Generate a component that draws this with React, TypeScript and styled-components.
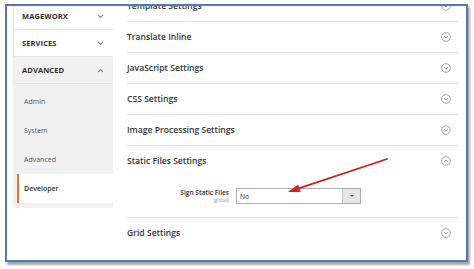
import React from "react";
import styled, { createGlobalStyle } from "styled-components";

const GlobalStyle = createGlobalStyle`
  html, body {
    margin: 0;
    padding: 0;
    background: #ffffff;
  }
  body {
    font-family: "Open Sans", "Liberation Sans", sans-serif;
    color: #303030;
  }
`;

const Page = styled.div`
  width: 474px;
  height: 269px;
  padding: 4px 0 0 5px;
  box-sizing: border-box;
`;

// blue screenshot frame with a drop shadow
const Frame = styled.div`
  width: 463px;
  height: 258px;
  box-sizing: border-box;
  border: 2px solid #5279b6;
  box-shadow: 2px 3px 2px rgba(60, 60, 60, 0.45);
  overflow: hidden;
  display: grid;
  grid-template-columns: 100px 331px;
  column-gap: 14px;
  padding-left: 6px;
  background: #ffffff;
`;

const Sidebar = styled.nav`
  display: flex;
  flex-direction: column;
  margin-top: -3px;
`;

const TopItem = styled.div<{ $open?: boolean }>`
  display: flex;
  align-items: center;
  justify-content: space-between;
  height: 27px;
  padding: 0 9px 0 8px;
  box-sizing: border-box;
  background: ${(p) => (p.$open ? "#f1f1f1" : "#ffffff")};
  border-bottom: 1px solid ${(p) => (p.$open ? "#e4e4e4" : "#e6e6e6")};
  border-left: 1px solid #ececec;
  font-size: 7.5px;
  font-weight: 700;
  letter-spacing: 0.1px;
  color: #303030;
`;

const Chevron = styled.svg`
  width: 7px;
  height: 5px;
  stroke: #8a8a8a;
  fill: none;
  stroke-width: 1.2;
`;

const SubList = styled.div`
  display: flex;
  flex-direction: column;
  background: #f1f1f1;
  padding: 3px 0 5px;
  border-radius: 0 0 3px 3px;
`;

const SubItem = styled.div<{ $active?: boolean }>`
  display: flex;
  align-items: center;
  height: 29px;
  box-sizing: border-box;
  margin-left: ${(p) => (p.$active ? "4px" : "0")};
  padding-left: ${(p) => (p.$active ? "5px" : "11px")};
  background: ${(p) => (p.$active ? "#ffffff" : "transparent")};
  border-left: ${(p) => (p.$active ? "2px solid #d8782f" : "none")};
  font-size: 7px;
  font-weight: ${(p) => (p.$active ? 600 : 400)};
  color: ${(p) => (p.$active ? "#303030" : "#555555")};
`;

const Main = styled.section`
  display: flex;
  flex-direction: column;
  margin-top: -15px;
  position: relative;
`;

const Group = styled.div<{ $first?: boolean }>`
  border-top: ${(p) => (p.$first ? "none" : "1px solid #e3e3e3")};
`;

const GroupHead = styled.div`
  display: flex;
  align-items: center;
  justify-content: space-between;
  height: 30px;
  padding-right: 7px;
  font-size: 8.6px;
  font-weight: 600;
  color: #333333;
`;

const Body = styled.div`
  height: 41px;
  display: flex;
  align-items: flex-start;
  padding-top: 12px;
  box-sizing: border-box;
`;

const Field = styled.div`
  display: flex;
  align-items: center;
  gap: 7px;
`;

const LabelBox = styled.div`
  width: 102px;
  display: flex;
  flex-direction: column;
  align-items: flex-end;
  line-height: 1;
`;

const LabelText = styled.span`
  font-size: 6.6px;
  font-weight: 600;
  color: #303030;
`;

const Scope = styled.span`
  font-size: 4.5px;
  color: #9a9a9a;
  margin-top: 1px;
`;

const Select = styled.div`
  width: 125px;
  height: 16px;
  box-sizing: border-box;
  border: 1px solid #adadad;
  display: flex;
  align-items: stretch;
  background: #ffffff;
`;

const SelectValue = styled.span`
  flex: 1;
  display: flex;
  align-items: center;
  padding-left: 3px;
  font-size: 6.6px;
  color: #303030;
`;

const SelectButton = styled.span`
  width: 17px;
  border-left: 1px solid #c8c8c8;
  background: #e6e6e6;
  display: flex;
  align-items: center;
  justify-content: center;
  &::after {
    content: "";
    border-left: 2px solid transparent;
    border-right: 2px solid transparent;
    border-top: 2.5px solid #555555;
  }
`;

const Arrow = styled.svg`
  position: absolute;
  left: 0;
  top: 0;
  width: 331px;
  height: 260px;
  pointer-events: none;
  overflow: visible;
`;

function SmallChevron({ up }: { up?: boolean }) {
  return (
    <Chevron viewBox="0 0 7 5">
      <polyline points={up ? "1,4 3.5,1.5 6,4" : "1,1 3.5,3.5 6,1"} />
    </Chevron>
  );
}

function CircleToggle({ up }: { up?: boolean }) {
  return (
    <svg width="10" height="10" viewBox="0 0 10 10">
      <circle cx="5" cy="5" r="4.3" fill="none" stroke="#8d8d8d" strokeWidth="0.8" />
      <polyline
        points={up ? "3.2,5.8 5,4.1 6.8,5.8" : "3.2,4.3 5,6 6.8,4.3"}
        fill="none"
        stroke="#8d8d8d"
        strokeWidth="0.8"
      />
    </svg>
  );
}

const groups = [
  "Template Settings",
  "Translate Inline",
  "JavaScript Settings",
  "CSS Settings",
  "Image Processing Settings",
];

export default function App() {
  return (
    <>
      <GlobalStyle />
      <Page>
        <Frame>
          <Sidebar>
            <TopItem>
              MAGEWORX <SmallChevron />
            </TopItem>
            <TopItem>
              SERVICES <SmallChevron />
            </TopItem>
            <TopItem $open>
              ADVANCED <SmallChevron up />
            </TopItem>
            <SubList>
              <SubItem>Admin</SubItem>
              <SubItem>System</SubItem>
              <SubItem>Advanced</SubItem>
              <SubItem $active>Developer</SubItem>
            </SubList>
          </Sidebar>

          <Main>
            {groups.map((g, i) => (
              <Group key={g} $first={i === 0}>
                <GroupHead>
                  {g}
                  <CircleToggle />
                </GroupHead>
              </Group>
            ))}
            <Group>
              <GroupHead>
                Static Files Settings
                <CircleToggle up />
              </GroupHead>
              <Body>
                <Field>
                  <LabelBox>
                    <LabelText>Sign Static Files</LabelText>
                    <Scope>[global]</Scope>
                  </LabelBox>
                  <Select>
                    <SelectValue>No</SelectValue>
                    <SelectButton />
                  </Select>
                </Field>
              </Body>
            </Group>
            <Group>
              <GroupHead>
                Grid Settings
                <CircleToggle />
              </GroupHead>
            </Group>

            <Arrow viewBox="0 0 331 260">
              <defs>
                <linearGradient id="red" x1="0" y1="0" x2="1" y2="0">
                  <stop offset="0" stopColor="#c8141a" />
                  <stop offset="1" stopColor="#e2262a" />
                </linearGradient>
              </defs>
              <line x1="260" y1="168" x2="172.4" y2="197.2" stroke="#d51e22" strokeWidth="1.8" strokeLinecap="round" />
              <polygon points="161,201 171.1,193.4 173.7,201" fill="url(#red)" />
            </Arrow>
          </Main>
        </Frame>
      </Page>
    </>
  );
}
